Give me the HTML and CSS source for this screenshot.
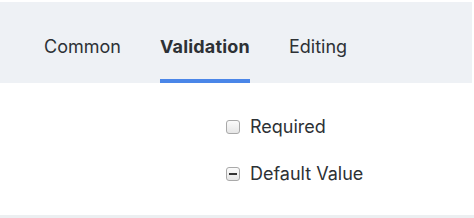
FILE: index.html
```html
<html>
<head>
    <title>Field settings</title>
    <link rel="stylesheet" href="styles.css">
</head>
<body>
    <div class="tabs">
        <div class="tab">Common</div>
        <div class="tab active">Validation</div>
        <div class="tab">Editing</div>
    </div>
    <div class="options">
        <label class="option"><span class="box"></span>Required</label>
        <label class="option"><span class="box mixed"></span>Default Value</label>
    </div>
    <div class="footer"></div>
</body>
</html>
```
FILE: styles.css
```css
body {
    margin: 0;
    padding-top: 2px;
    font-family: Inter, "Liberation Sans", Arial, sans-serif;
    color: #2d3135;
    background: #ffffff;
}
.tabs {
    display: flex;
    height: 81px;
    margin-right: 2px;
    padding-left: 44px;
    gap: 39px;
    background: #eef1f5;
}
.tab {
    font-size: 18px;
    padding-top: 34px;
    border-bottom: 4px solid transparent;
    box-sizing: border-box;
}
.tab.active {
    font-weight: bold;
    letter-spacing: 0.2px;
    border-bottom-color: #4a86e8;
}
.options {
    display: flex;
    flex-direction: column;
    gap: 26px;
    height: 132px;
    box-sizing: border-box;
    padding: 33px 0 0 226px;
}
.option {
    display: flex;
    align-items: center;
    gap: 10px;
    font-size: 18px;
    line-height: 21px;
}
.box {
    width: 12px;
    height: 12px;
    border: 1px solid #a9a9a9;
    border-radius: 3px;
    background: linear-gradient(#fbfbfb, #e6e6e6);
    position: relative;
}
.box.mixed::after {
    content: "";
    position: absolute;
    left: 2px;
    right: 2px;
    top: 5px;
    height: 2px;
    background: #333333;
}
.footer {
    height: 3px;
    background: #eceff1;
}
```
